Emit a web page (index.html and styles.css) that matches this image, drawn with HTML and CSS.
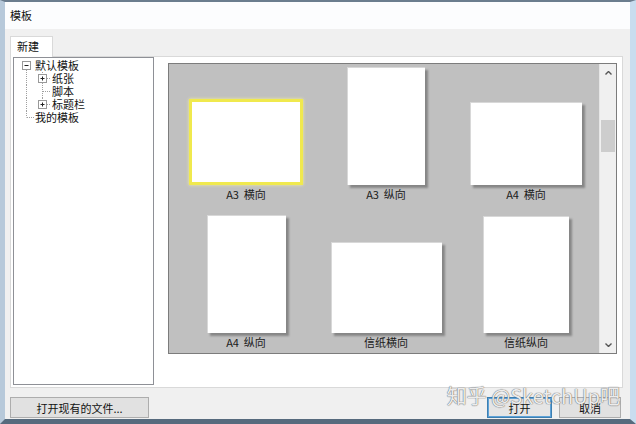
FILE: index.html
```html
<html>
<head>
    <title>模板</title>
    <link rel="stylesheet" href="styles.css">
</head>
<body>
    <div class="window">
        <div class="titlebar">模板</div>
        <div class="client">
            <div class="tabs">
                <div class="tab">新建</div>
            </div>
            <div class="tabpage">
                <div class="tree">
                    <div class="node">
                        <svg class="gutter" width="21" height="13">
                            <rect x="8.5" y="2.5" width="8" height="8" fill="#fff" stroke="#999"/>
                            <line x1="10.5" y1="6.5" x2="14.5" y2="6.5" stroke="#222"/>
                            <line x1="12.5" y1="11" x2="12.5" y2="13" stroke="#a0a0a0" stroke-dasharray="1 1"/>
                        </svg>
                        <span>默认模板</span>
                    </div>
                    <div class="node">
                        <svg class="gutter" width="38" height="13">
                            <line x1="12.5" y1="0" x2="12.5" y2="13" stroke="#a0a0a0" stroke-dasharray="1 1"/>
                            <line x1="28.5" y1="0" x2="28.5" y2="2" stroke="#a0a0a0" stroke-dasharray="1 1"/>
                            <rect x="24.5" y="2.5" width="8" height="8" fill="#fff" stroke="#999"/>
                            <line x1="26.5" y1="6.5" x2="30.5" y2="6.5" stroke="#222"/>
                            <line x1="28.5" y1="4.5" x2="28.5" y2="8.5" stroke="#222"/>
                            <line x1="28.5" y1="11" x2="28.5" y2="13" stroke="#a0a0a0" stroke-dasharray="1 1"/>
                            <line x1="33" y1="6.5" x2="36" y2="6.5" stroke="#a0a0a0" stroke-dasharray="1 1"/>
                        </svg>
                        <span>纸张</span>
                    </div>
                    <div class="node">
                        <svg class="gutter" width="38" height="13">
                            <line x1="12.5" y1="0" x2="12.5" y2="13" stroke="#a0a0a0" stroke-dasharray="1 1"/>
                            <line x1="28.5" y1="0" x2="28.5" y2="13" stroke="#a0a0a0" stroke-dasharray="1 1"/>
                            <line x1="29" y1="6.5" x2="37" y2="6.5" stroke="#a0a0a0" stroke-dasharray="1 1"/>
                        </svg>
                        <span>脚本</span>
                    </div>
                    <div class="node">
                        <svg class="gutter" width="38" height="13">
                            <line x1="12.5" y1="0" x2="12.5" y2="13" stroke="#a0a0a0" stroke-dasharray="1 1"/>
                            <line x1="28.5" y1="0" x2="28.5" y2="2" stroke="#a0a0a0" stroke-dasharray="1 1"/>
                            <rect x="24.5" y="2.5" width="8" height="8" fill="#fff" stroke="#999"/>
                            <line x1="26.5" y1="6.5" x2="30.5" y2="6.5" stroke="#222"/>
                            <line x1="28.5" y1="4.5" x2="28.5" y2="8.5" stroke="#222"/>
                            <line x1="33" y1="6.5" x2="36" y2="6.5" stroke="#a0a0a0" stroke-dasharray="1 1"/>
                        </svg>
                        <span>标题栏</span>
                    </div>
                    <div class="node">
                        <svg class="gutter" width="21" height="13">
                            <line x1="12.5" y1="0" x2="12.5" y2="6.5" stroke="#a0a0a0" stroke-dasharray="1 1"/>
                            <line x1="13" y1="6.5" x2="20" y2="6.5" stroke="#a0a0a0" stroke-dasharray="1 1"/>
                        </svg>
                        <span>我的模板</span>
                    </div>
                </div>

                <div class="gallery">
                    <div class="grid">
                        <div class="cell">
                            <div class="thumb selected" style="width:114px;height:86px"></div>
                            <div class="label">A3&nbsp; 横向</div>
                        </div>
                        <div class="cell">
                            <div class="thumb" style="width:78px;height:118px"></div>
                            <div class="label">A3&nbsp; 纵向</div>
                        </div>
                        <div class="cell">
                            <div class="thumb" style="width:112px;height:83px"></div>
                            <div class="label">A4&nbsp; 横向</div>
                        </div>
                        <div class="cell">
                            <div class="thumb" style="width:79px;height:118px"></div>
                            <div class="label">A4&nbsp; 纵向</div>
                        </div>
                        <div class="cell">
                            <div class="thumb" style="width:111px;height:91px"></div>
                            <div class="label">信纸横向</div>
                        </div>
                        <div class="cell">
                            <div class="thumb" style="width:86px;height:117px"></div>
                            <div class="label">信纸纵向</div>
                        </div>
                    </div>
                    <div class="scrollbar">
                        <div class="sb-btn">
                            <svg width="7" height="4"><polyline points="0.5,3.5 3.5,0.5 6.5,3.5" fill="none" stroke="#555" stroke-width="1.4"/></svg>
                        </div>
                        <div class="sb-track">
                            <div class="sb-thumb"></div>
                        </div>
                        <div class="sb-btn">
                            <svg width="7" height="4"><polyline points="0.5,0.5 3.5,3.5 6.5,0.5" fill="none" stroke="#555" stroke-width="1.4"/></svg>
                        </div>
                    </div>
                </div>
            </div>

            <div class="actions">
                <button class="btn btn-wide">打开现有的文件...</button>
                <div class="actions-right">
                    <button class="btn btn-default">打开</button>
                    <button class="btn btn-cancel">取消</button>
                </div>
            </div>
        </div>
        <div class="watermark">知乎 @SketchUp吧</div>
    </div>
</body>
</html>
```

FILE: styles.css
```css
body {
    margin: 0;
    background-color: #5b6e80;
    font-family: "Noto Sans CJK SC", "Liberation Sans", sans-serif;
    font-size: 11px;
    color: #111;
}

.window {
    position: relative;
    width: 636px;
    height: 424px;
    box-sizing: border-box;
    border-top: 2px solid #6b7d8e;
    border-left: 5px solid #b7c9da;
    border-right: 6px solid #c9ddef;
    border-bottom: 5px solid #566a7d;
    background-color: #f0f0f0;
    display: flex;
    flex-direction: column;
}

.titlebar {
    height: 27px;
    line-height: 27px;
    padding-left: 5px;
    background-color: #fcfdfe;
}

.client {
    flex: 1;
    padding: 7px 7px 0 5px;
    display: flex;
    flex-direction: column;
}

.tabs {
    display: flex;
    height: 20px;
}

.tab {
    position: relative;
    z-index: 1;
    width: 43px;
    box-sizing: border-box;
    height: 21px;
    padding-left: 6px;
    line-height: 19px;
    background-color: #fff;
    border: 1px solid #d9d9d9;
    border-bottom: none;
}

.tabpage {
    height: 332px;
    box-sizing: border-box;
    border: 1px solid #d9d9d9;
    background-color: #fff;
    display: flex;
    align-items: flex-start;
    gap: 14px;
    padding-left: 2px;
}

/* tree */

.tree {
    width: 141px;
    height: 328px;
    box-sizing: border-box;
    border: 1px solid #8e9096;
    padding-top: 1px;
}

.node {
    display: flex;
    align-items: center;
    height: 13px;
    line-height: 13px;
    white-space: nowrap;
}

.gutter {
    flex-shrink: 0;
    display: block;
}

/* thumbnails */

.gallery {
    margin-top: 6px;
    width: 449px;
    height: 291px;
    box-sizing: border-box;
    border: 1px solid #7c7c7c;
    background-color: #c0c0c0;
    display: flex;
}

.grid {
    flex: 1;
    display: grid;
    grid-template-columns: repeat(3, 140px);
    grid-template-rows: 137px 148px;
    padding-left: 7px;
}

.cell {
    display: flex;
    flex-direction: column;
    align-items: center;
    justify-content: flex-end;
}

.thumb {
    box-sizing: border-box;
    background-color: #fff;
    border-top: 1px solid #d8d8d8;
    border-left: 1px solid #d8d8d8;
    box-shadow: 3px 3px 2px rgba(0, 0, 0, 0.3);
}

.thumb.selected {
    border: 3px solid #f0e94e;
    box-shadow: 0 0 3px #f5f09a;
}

.label {
    margin-top: 2px;
    height: 14px;
    line-height: 14px;
    color: #1a1a1a;
}

.scrollbar {
    width: 16px;
    background-color: #f0f0f0;
    border-left: 1px solid #e6e6e6;
    display: flex;
    flex-direction: column;
}

.sb-btn {
    height: 17px;
    display: flex;
    align-items: center;
    justify-content: center;
}

.sb-track {
    flex: 1;
    padding-top: 39px;
}

.sb-thumb {
    height: 32px;
    margin: 0 1px;
    background-color: #cdcdcd;
}

/* buttons */

.actions {
    margin-top: 9px;
    display: flex;
    justify-content: space-between;
    align-items: center;
}

.actions-right {
    display: flex;
    gap: 7px;
    margin-right: 2px;
}

.btn {
    height: 21px;
    padding: 0;
    font-family: "Noto Sans CJK SC", "Liberation Sans", sans-serif;
    font-size: 11px;
    color: #111;
    background-color: #e1e1e1;
    border: 1px solid #adadad;
}

.btn-wide {
    width: 139px;
}

.btn-default {
    width: 65px;
    background-color: #e5e5e5;
    border: 1px solid #3c7fb1;
    box-shadow: inset 0 0 0 1px #5ea2d8;
}

.btn-cancel {
    width: 62px;
}

.watermark {
    position: absolute;
    right: 10px;
    bottom: 11px;
    font-size: 20px;
    line-height: 24px;
    color: rgba(255, 255, 255, 0.9);
    text-shadow: 0 0 1px #666, 0 0 1px #666;
    white-space: nowrap;
}
```
